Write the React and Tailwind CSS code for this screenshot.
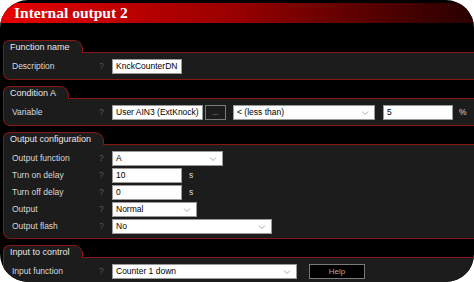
import React from 'react';

const font = { fontFamily: '"Liberation Sans", Arial, sans-serif' };

const box = 'h-[15px] bg-white border border-[#9a9a9a] text-[8.5px] leading-[13px] text-black px-[3px] whitespace-nowrap overflow-hidden';

function Chevron() {
  return (
    <svg className="absolute right-[5px] top-[4px]" width="8" height="6" viewBox="0 0 8 6">
      <polyline points="1,1.5 4,4.5 7,1.5" fill="none" stroke="#a8a8a8" strokeWidth="1" />
    </svg>
  );
}

function Section({ title, children, pb = 'pb-[5px]' }) {
  return (
    <div className="flex flex-col w-[490px]">
      <div
        className="self-start relative z-10 -mb-px h-[13px] pl-[6px] pr-[12px] rounded-tl-[6px] rounded-tr-[9px]
          border border-b-0 border-[#8a1515] bg-[#1c1c1c] text-[9px] leading-[12px] text-[#e8e8e8]"
      >
        {title}
      </div>
      <div
        className={`border border-r-0 border-[#8a1515] rounded-bl-[7px] bg-[#1c1c1c] pl-[8px] pt-[6px] ${pb}
          flex flex-col gap-[2px]`}
      >
        {children}
      </div>
    </div>
  );
}

function Row({ label, children }) {
  return (
    <div className="flex items-center h-[15px]">
      <div className="w-[87px] text-[8.5px] text-[#d8d8d8]">{label}</div>
      <div className="w-[13px] text-[8.5px] text-[#5a5a5a]">?</div>
      <div className="flex items-center">{children}</div>
    </div>
  );
}

export default function App() {
  return (
    <div className="w-[474px] h-[282px] bg-white" style={font}>
      <div className="w-full h-full rounded-[28px] bg-black overflow-hidden flex flex-col pt-[3px]">
        <div className="h-[20px] shrink-0 bg-gradient-to-r from-[#e80000] via-[#980000] to-[#2a0000] flex items-center pl-[14px]">
          <div
            className="text-white text-[15.5px] font-bold leading-none"
            style={{ fontFamily: '"Liberation Serif", "DejaVu Serif", serif' }}
          >
            Internal output 2
          </div>
        </div>

        <div className="mt-[17px] pl-[3px] flex flex-col gap-[6px]">
          <Section title="Function name">
            <Row label="Description">
              <div className={`w-[70px] ${box}`}>KnckCounterDN</div>
            </Row>
          </Section>

          <Section title="Condition A">
            <Row label="Variable">
              <div className={`w-[91px] ${box}`}>User AIN3 (ExtKnock)</div>
              <div className="ml-[2px] w-[21px] h-[15px] bg-[#1c1c1c] border border-[#7a7a7a] text-[8px] leading-[13px] text-[#aaa] text-center">
                ...
              </div>
              <div className={`relative ml-[7px] w-[142px] ${box}`}>
                &lt; (less than)
                <Chevron />
              </div>
              <div className={`ml-[8px] w-[70px] ${box}`}>5</div>
              <div className="ml-[6px] text-[8.5px] text-[#d8d8d8]">%</div>
            </Row>
          </Section>

          <Section title="Output configuration" pb="pb-[4px]">
            <Row label="Output function">
              <div className={`relative w-[111px] ${box}`}>
                A
                <Chevron />
              </div>
            </Row>
            <Row label="Turn on delay">
              <div className={`w-[70px] ${box}`}>10</div>
              <div className="ml-[7px] text-[8.5px] text-[#d8d8d8]">s</div>
            </Row>
            <Row label="Turn off delay">
              <div className={`w-[70px] ${box}`}>0</div>
              <div className="ml-[7px] text-[8.5px] text-[#d8d8d8]">s</div>
            </Row>
            <Row label="Output">
              <div className={`relative w-[85px] ${box}`}>
                Normal
                <Chevron />
              </div>
            </Row>
            <Row label="Output flash">
              <div className={`relative w-[160px] ${box}`}>
                No
                <Chevron />
              </div>
            </Row>
          </Section>

          <Section title="Input to control">
            <Row label="Input function">
              <div className={`relative w-[185px] ${box}`}>
                Counter 1 down
                <Chevron />
              </div>
              <div className="ml-[12px] w-[56px] h-[15px] bg-black border border-[#7a7a7a] text-[8px] leading-[13px] text-[#aaa] text-center">
                Help
              </div>
            </Row>
          </Section>
        </div>
      </div>
    </div>
  );
}
